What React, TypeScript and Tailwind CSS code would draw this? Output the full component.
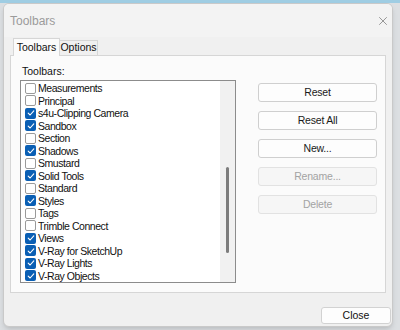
import React from "react";
import { X } from "lucide-react";

const items = [
  { name: "Measurements", on: false },
  { name: "Principal", on: false },
  { name: "s4u-Clipping Camera", on: true },
  { name: "Sandbox", on: true },
  { name: "Section", on: false },
  { name: "Shadows", on: true },
  { name: "Smustard", on: false },
  { name: "Solid Tools", on: true },
  { name: "Standard", on: false },
  { name: "Styles", on: true },
  { name: "Tags", on: false },
  { name: "Trimble Connect", on: false },
  { name: "Views", on: true },
  { name: "V-Ray for SketchUp", on: true },
  { name: "V-Ray Lights", on: true },
  { name: "V-Ray Objects", on: true },
];

function Box({ on }: { on: boolean }) {
  if (on) {
    return (
      <span className="flex h-[11px] w-[11px] shrink-0 items-center justify-center rounded-[2px] bg-[#0a5fb4]">
        <svg width="8" height="8" viewBox="0 0 8 8" fill="none">
          <path d="M1.2 4.2 L3.1 6 L6.8 1.8" stroke="white" strokeWidth="1.1" strokeLinecap="round" strokeLinejoin="round" />
        </svg>
      </span>
    );
  }
  return <span className="h-[11px] w-[11px] shrink-0 rounded-[2px] border border-[#9a9a9a] bg-white" />;
}

function Btn({ label, disabled }: { label: string; disabled?: boolean }) {
  return (
    <button
      className={
        disabled
          ? "h-[19px] w-[119px] rounded-[3px] border border-[#e2e2e2] bg-[#f6f6f6] text-[10.5px] tracking-[-0.2px] text-[#a3a3a3]"
          : "h-[19px] w-[119px] rounded-[3px] border border-[#cfcfcf] bg-[#fdfdfd] text-[10.5px] tracking-[-0.2px] text-[#1a1a1a]"
      }
    >
      {label}
    </button>
  );
}

export default function App() {
  return (
    <div className="h-[330px] w-[400px] overflow-hidden bg-[#dcdfe2] font-['Liberation_Sans',sans-serif]">
      <div className="h-[3px] bg-[#9fcde3]" />
      <div className="ml-[3px] flex h-[324px] w-[390px] flex-col overflow-hidden rounded-[6px] border border-[#c9c9c9] bg-[#f0f0f0] shadow-md">
        {/* title bar */}
        <div className="flex h-[33px] items-center justify-between bg-[#f3f3f3] pl-[6px] pr-[2px]">
          <span className="text-[12px] text-[#9b9b9b]">Toolbars</span>
          <X className="h-[14px] w-[14px] text-[#7a7a7a]" strokeWidth={1.3} />
        </div>

        {/* tabs */}
        <div className="flex h-[18px] items-end pl-[9px]">
          <div className="relative z-10 -mb-px flex h-[18px] w-[47px] items-center justify-center border border-b-0 border-[#d6d6d6] bg-[#fbfbfb] text-[10.5px] text-[#111]">
            Toolbars
          </div>
          <div className="flex h-[15px] w-[38px] items-center justify-center border border-b-0 border-l-0 border-[#d6d6d6] bg-[#f0f0f0] text-[10.5px] text-[#111]">
            Options
          </div>
        </div>

        {/* panel */}
        <div className="mx-[6px] flex h-[238px] gap-[22px] border border-[#d6d6d6] bg-[#fbfbfb] pl-[9px] pt-[9px]">
          <div className="flex flex-col">
            <span className="mb-[2px] ml-[2px] h-[13px] text-[10.5px] leading-[13px] text-[#111]">Toolbars:</span>
            <div className="flex h-[203px] w-[216px] border border-[#8c8c8c] bg-white">
              <div className="flex flex-1 flex-col pl-[4px] pt-px">
                {items.map((it) => (
                  <div key={it.name} className="flex h-[12.5px] items-center gap-[2px]">
                    <Box on={it.on} />
                    <span className="text-[10.5px] leading-none tracking-[-0.45px] text-[#111]">{it.name}</span>
                  </div>
                ))}
              </div>
              <div className="flex w-[15px] justify-center bg-[#f1f1f1] pt-[86px]">
                <div className="h-[86px] w-[3px] rounded-full bg-[#7d7d7d]" />
              </div>
            </div>
          </div>
          <div className="flex flex-col gap-[9px] pt-[18px]">
            <Btn label="Reset" />
            <Btn label="Reset All" />
            <Btn label="New..." />
            <Btn label="Rename..." disabled />
            <Btn label="Delete" disabled />
          </div>
        </div>

        {/* footer */}
        <div className="flex flex-1 items-start justify-end pr-[1px] pt-[14px]">
          <button className="h-[17px] w-[70px] rounded-[3px] border border-[#d2d2d2] bg-[#fdfdfd] text-[10.5px] text-[#111]">
            Close
          </button>
        </div>
      </div>
    </div>
  );
}
